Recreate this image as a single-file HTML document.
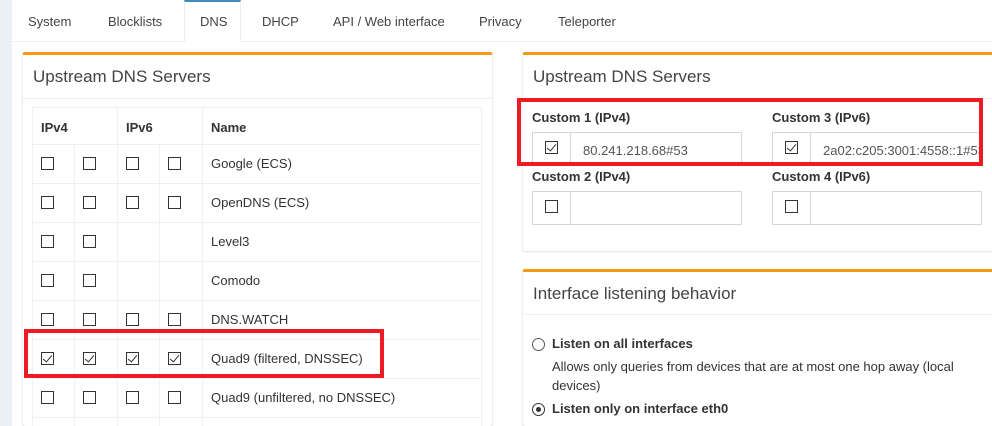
<!DOCTYPE html>
<html style="overflow:hidden;width:992px;height:426px"><head><style>
*{box-sizing:border-box;margin:0;padding:0}
body{width:992px;height:426px;overflow:hidden;background:#ecf0f5;font-family:"Liberation Sans",sans-serif;color:#333;position:relative;font-size:13px}
.abs{position:absolute}
.tabs{left:12px;top:0;width:980px;height:42px;background:#fff;border-bottom:1px solid #eee}
.tab{position:absolute;top:14px;font-size:13px;color:#444}
.content{left:12px;top:42px;width:980px;height:384px;background:#fff}
.box{position:absolute;background:#fff;border-top:3px solid #f39c12;border-radius:3px;box-shadow:0 1px 1px rgba(0,0,0,.12);border-left:1px solid #f0f0f0;border-right:1px solid #f0f0f0}
.bt{position:absolute;left:10px;font-size:17px;color:#444}
.sep{position:absolute;left:0;right:0;height:1px;background:#f0f0f0}
.cb{position:absolute;width:13px;height:13px;border:1px solid #333;background:#fff}
.cb.c::after{content:"";position:absolute;left:3px;top:0px;width:4px;height:8px;border:solid #333;border-width:0 1px 1px 0;transform:rotate(40deg)}
.vl{position:absolute;width:1px;background:#f0f0f0}
.hl{position:absolute;height:1px;background:#f0f0f0}
.lbl{position:absolute;font-weight:bold;font-size:13px;color:#333}
.ig{position:absolute;height:34px;border:1px solid #d2d6de}
.red{position:absolute;border:4px solid #ed1c24}
</style></head><body>
<div class="abs tabs">
<div class="tab" style="left:16px">System</div>
<div class="tab" style="left:96px">Blocklists</div>
<div class="abs" style="left:172px;top:0;width:57px;height:43px;border-top:2px solid #3c8dbc;border-left:1px solid #eee;border-right:1px solid #eee;background:#fff"></div>
<div class="tab" style="left:188px">DNS</div>
<div class="tab" style="left:250px">DHCP</div>
<div class="tab" style="left:321px">API / Web interface</div>
<div class="tab" style="left:467px">Privacy</div>
<div class="tab" style="left:546px">Teleporter</div>
</div>
<div class="abs content"></div>

<div class="box" style="left:22px;top:52px;width:471px;height:374px">
<div class="bt" style="top:12px">Upstream DNS Servers</div>
<div class="sep" style="top:43px"></div>
</div>
<div class="abs" style="left:32px;top:107px;width:450px;height:319px;border:1px solid #f0f0f0;border-bottom:none">
<div class="lbl" style="left:8px;top:12px">IPv4</div>
<div class="lbl" style="left:93px;top:12px">IPv6</div>
<div class="lbl" style="left:178px;top:12px">Name</div>
<div class="hl" style="left:0;right:0;top:36px"></div>
<div class="hl" style="left:0;right:0;top:75px"></div>
<div class="hl" style="left:0;right:0;top:114px"></div>
<div class="hl" style="left:0;right:0;top:153px"></div>
<div class="hl" style="left:0;right:0;top:192px"></div>
<div class="hl" style="left:0;right:0;top:231px"></div>
<div class="hl" style="left:0;right:0;top:270px"></div>
<div class="hl" style="left:0;right:0;top:309px"></div>
<div class="vl" style="left:84px;top:0;bottom:0"></div>
<div class="vl" style="left:169px;top:0;bottom:0"></div>
<div class="vl" style="left:41px;top:36px;bottom:0"></div>
<div class="vl" style="left:126px;top:36px;bottom:0"></div>
</div>
<div class="abs" style="left:211px;top:156px">Google (ECS)</div>
<div class="abs" style="left:211px;top:195px">OpenDNS (ECS)</div>
<div class="abs" style="left:211px;top:234px">Level3</div>
<div class="abs" style="left:211px;top:273px">Comodo</div>
<div class="abs" style="left:211px;top:312px">DNS.WATCH</div>
<div class="abs" style="left:211px;top:351px">Quad9 (filtered, DNSSEC)</div>
<div class="abs" style="left:211px;top:390px">Quad9 (unfiltered, no DNSSEC)</div>
<div class="cb" style="left:41px;top:157px"></div><div class="cb" style="left:83px;top:157px"></div><div class="cb" style="left:126px;top:157px"></div><div class="cb" style="left:168px;top:157px"></div>
<div class="cb" style="left:41px;top:196px"></div><div class="cb" style="left:83px;top:196px"></div><div class="cb" style="left:126px;top:196px"></div><div class="cb" style="left:168px;top:196px"></div>
<div class="cb" style="left:41px;top:235px"></div><div class="cb" style="left:83px;top:235px"></div>
<div class="cb" style="left:41px;top:274px"></div><div class="cb" style="left:83px;top:274px"></div>
<div class="cb" style="left:41px;top:313px"></div><div class="cb" style="left:83px;top:313px"></div><div class="cb" style="left:126px;top:313px"></div><div class="cb" style="left:168px;top:313px"></div>
<div class="cb c" style="left:41px;top:352px"></div><div class="cb c" style="left:83px;top:352px"></div><div class="cb c" style="left:126px;top:352px"></div><div class="cb c" style="left:168px;top:352px"></div>
<div class="cb" style="left:41px;top:391px"></div><div class="cb" style="left:83px;top:391px"></div><div class="cb" style="left:126px;top:391px"></div><div class="cb" style="left:168px;top:391px"></div>

<div class="box" style="left:522px;top:52px;width:475px;height:199px">
<div class="bt" style="top:12px">Upstream DNS Servers</div>
<div class="sep" style="top:43px"></div>
</div>
<div class="lbl" style="left:532px;top:110px">Custom 1 (IPv4)</div>
<div class="lbl" style="left:772px;top:110px">Custom 3 (IPv6)</div>
<div class="lbl" style="left:532px;top:169px">Custom 2 (IPv4)</div>
<div class="lbl" style="left:772px;top:169px">Custom 4 (IPv6)</div>
<div class="ig" style="left:532px;top:132px;width:210px"><div class="vl" style="left:37px;top:0;bottom:0;background:#d2d6de"></div><div class="abs" style="left:50px;top:10px;color:#555">80.241.218.68#53</div></div>
<div class="ig" style="left:772px;top:132px;width:210px"><div class="vl" style="left:37px;top:0;bottom:0;background:#d2d6de"></div><div class="abs" style="left:50px;top:10px;color:#555;white-space:nowrap;overflow:hidden;width:158px">2a02:c205:3001:4558::1#53</div></div>
<div class="ig" style="left:532px;top:191px;width:210px"><div class="vl" style="left:37px;top:0;bottom:0;background:#d2d6de"></div></div>
<div class="ig" style="left:772px;top:191px;width:210px"><div class="vl" style="left:37px;top:0;bottom:0;background:#d2d6de"></div></div>
<div class="cb c" style="left:545px;top:141px"></div>
<div class="cb c" style="left:785px;top:141px"></div>
<div class="cb" style="left:545px;top:200px"></div>
<div class="cb" style="left:785px;top:200px"></div>

<div class="box" style="left:522px;top:269px;width:475px;height:157px">
<div class="bt" style="top:12px">Interface listening behavior</div>
<div class="sep" style="top:42px"></div>
</div>
<div class="abs" style="left:532px;top:338px;width:13px;height:13px;border:1px solid #555;border-radius:50%"></div>
<div class="lbl" style="left:552px;top:336px">Listen on all interfaces</div>
<div class="abs" style="left:552px;top:357px;line-height:19px;width:420px">Allows only queries from devices that are at most one hop away (local devices)</div>
<div class="abs" style="left:532px;top:403px;width:13px;height:13px;border:1px solid #333;border-radius:50%"><div class="abs" style="left:3px;top:3px;width:5px;height:5px;background:#333;border-radius:50%"></div></div>
<div class="lbl" style="left:552px;top:401px">Listen only on interface eth0</div>

<div class="red" style="left:517px;top:98px;width:466px;height:68px"></div>
<div class="red" style="left:24px;top:329px;width:360px;height:49px"></div>
</body></html>
